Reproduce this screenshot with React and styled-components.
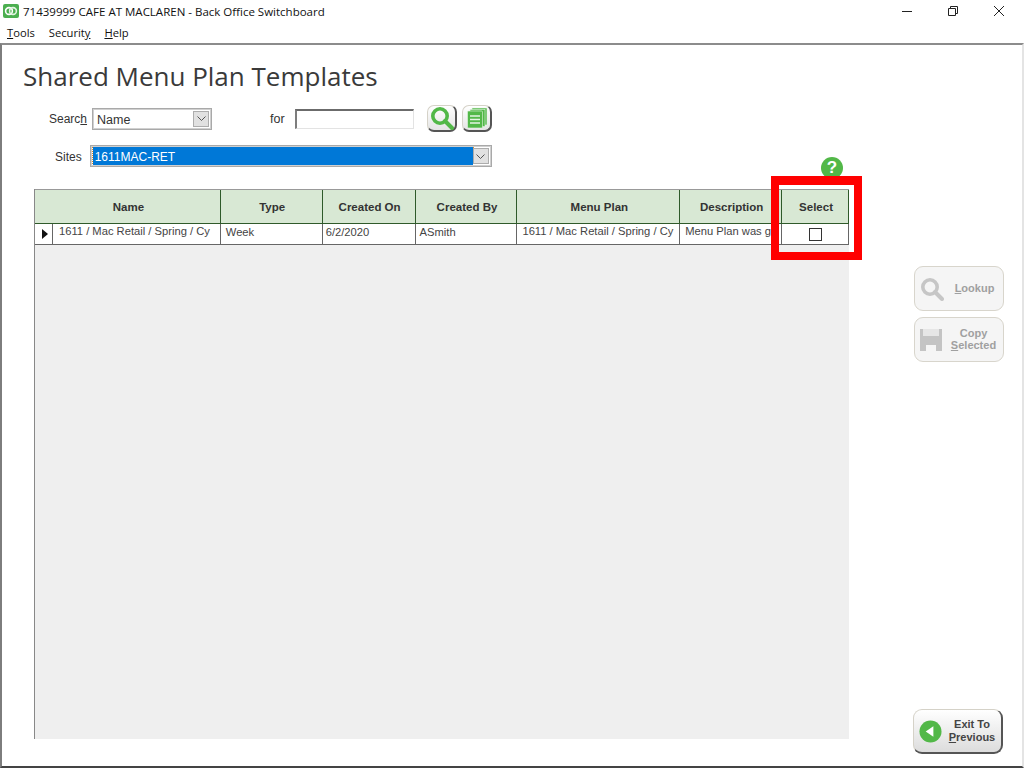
import React from 'react';
import styled, { createGlobalStyle } from 'styled-components';

const COLUMNS = [
  { title: 'Name', width: 186 },
  { title: 'Type', width: 102 },
  { title: 'Created On', width: 93 },
  { title: 'Created By', width: 102 },
  { title: 'Menu Plan', width: 163 },
  { title: 'Description', width: 102 },
  { title: 'Select', width: 67 },
];

const ROW = [
  { text: '1611 / Mac Retail / Spring / Cy', width: 168, indent: 6, top: 1 },
  { text: 'Week', width: 102, indent: 5, top: 2 },
  { text: '6/2/2020', width: 93, indent: 3, top: 2 },
  { text: 'ASmith', width: 102, indent: 4, top: 2 },
  { text: '1611 / Mac Retail / Spring / Cy', width: 163, indent: 5, top: 1 },
  { text: 'Menu Plan was g', width: 102, indent: 5, top: 1 },
];

function AppIcon() {
  return (
    <svg width="16" height="14" viewBox="0 0 16 14">
      <rect width="16" height="14" rx="2" fill="#4caf50" />
      <circle cx="6" cy="7" r="3.4" fill="none" stroke="#fff" strokeWidth="1.6" />
      <circle cx="10" cy="7" r="3.4" fill="none" stroke="#e4f4e2" strokeWidth="1.6" />
    </svg>
  );
}

function Magnifier({ color, size = 24 }) {
  return (
    <svg width={size} height={size} viewBox="0 0 24 24">
      <circle cx="10" cy="10" r="7.2" fill="none" stroke={color} strokeWidth="3.6" />
      <path d="M15 15 L22 22" stroke={color} strokeWidth="4" strokeLinecap="round" />
    </svg>
  );
}

function Pages() {
  return (
    <svg width="22" height="22" viewBox="0 0 22 22">
      <rect x="6" y="1" width="15" height="17" fill="#52b848" stroke="#e8f5e6" strokeWidth="0.6" />
      <rect x="4" y="2.5" width="15" height="17" fill="#52b848" stroke="#e8f5e6" strokeWidth="0.6" />
      <rect x="1.5" y="4" width="15" height="17" rx="1" fill="#52b848" stroke="#e8f5e6" strokeWidth="0.6" />
      <path d="M4 9 H14 M4 12.5 H14 M4 16 H14" stroke="#e4f4e2" strokeWidth="1.6" />
    </svg>
  );
}

function Disk() {
  return (
    <svg width="22" height="24" viewBox="0 0 22 24">
      <path d="M0 1 H22 V23 H0 Z" fill="#c4c4c4" />
      <rect x="3" y="1" width="16" height="7" fill="#e6e6e6" />
      <rect x="6" y="17" width="10" height="6" fill="#f5f5f5" />
    </svg>
  );
}

function BackArrow() {
  return (
    <svg width="23" height="23" viewBox="0 0 24 24">
      <circle cx="12" cy="12" r="11.5" fill="#52b848" />
      <path d="M7 12 L15 6.5 V17.5 Z" fill="#fff" />
    </svg>
  );
}

function Chevron() {
  return (
    <svg width="9" height="5" viewBox="0 0 9 5">
      <path d="M0.5 0.5 L4.5 4.5 L8.5 0.5" fill="none" stroke="#555" strokeWidth="1" />
    </svg>
  );
}

export default function App() {
  return (
    <Window>
      <GlobalStyle />
      <TitleBar>
        <AppIcon />
        <TitleText>71439999 CAFE AT MACLAREN - Back Office Switchboard</TitleText>
        <WindowControls>
          <svg width="12" height="12" viewBox="0 0 12 12">
            <path d="M1 6.5 H11" stroke="#222" strokeWidth="1" />
          </svg>
          <svg width="12" height="12" viewBox="0 0 12 12">
            <path d="M1.5 3.5 H8.5 V10.5 H1.5 Z M3.5 3.5 V1.5 H10.5 V8.5 H8.5" fill="none" stroke="#222" strokeWidth="1" />
          </svg>
          <svg width="12" height="12" viewBox="0 0 12 12">
            <path d="M1 1 L11 11 M11 1 L1 11" stroke="#222" strokeWidth="1" />
          </svg>
        </WindowControls>
      </TitleBar>
      <MenuBar>
        <MenuItem><u>T</u>ools</MenuItem>
        <MenuItem><span>Securit</span><u>y</u></MenuItem>
        <MenuItem><u>H</u>elp</MenuItem>
      </MenuBar>
      <Frame>
        <Content>
          <PageTitle>Shared Menu Plan Templates</PageTitle>
          <SearchRow>
            <Label>Searc<u>h</u></Label>
            <Combo $width={120}>
              <ComboValue>Name</ComboValue>
              <ComboArrow><Chevron /></ComboArrow>
            </Combo>
            <ForLabel>for</ForLabel>
            <ForInput type="text" />
            <ToolButton><Magnifier color="#52b848" /></ToolButton>
            <ToolButton><Pages /></ToolButton>
          </SearchRow>
          <SitesRow>
            <Label>Sites</Label>
            <Combo $width={402}>
              <ComboValue $selected>1611MAC-RET</ComboValue>
              <ComboArrow><Chevron /></ComboArrow>
            </Combo>
          </SitesRow>
          <HelpRow>
            <HelpBadge>?</HelpBadge>
          </HelpRow>
          <Grid>
            <HeaderRow>
              {COLUMNS.map((c) => (
                <HeaderCell key={c.title} $width={c.width}>{c.title}</HeaderCell>
              ))}
            </HeaderRow>
            <DataRow>
              <RowMarker />
              {ROW.map((cell, i) => (
                <DataCell key={i} $width={cell.width} $indent={cell.indent} $top={cell.top}>
                  {cell.text}
                </DataCell>
              ))}
              <SelectCell>
                <Check type="checkbox" />
              </SelectCell>
            </DataRow>
            <GridFill />
          </Grid>
          <Highlight />
        </Content>
        <Side>
          <SideGroup>
            <ActionButton disabled>
              <Magnifier color="#c6c6c6" />
              <ActionLabel><u>L</u>ookup</ActionLabel>
            </ActionButton>
            <ActionButton disabled>
              <Disk />
              <ActionLabel>Copy<br /><u>S</u>elected</ActionLabel>
            </ActionButton>
          </SideGroup>
          <ExitButton>
            <BackArrow />
            <ExitLabel>Exit To<br /><u>P</u>revious</ExitLabel>
          </ExitButton>
        </Side>
      </Frame>
    </Window>
  );
}

const GlobalStyle = createGlobalStyle`
  html, body {
    margin: 0;
    padding: 0;
    background: #fff;
    overflow: hidden;
  }
  * {
    box-sizing: border-box;
  }
`;

const Window = styled.div`
  display: flex;
  flex-direction: column;
  width: 1024px;
  height: 768px;
  background: #fff;
  font-family: "Liberation Sans", Arial, sans-serif;
  font-size: 12px;
  color: #333;
`;

const TitleBar = styled.div`
  display: flex;
  align-items: center;
  height: 22px;
  padding-left: 3px;
  gap: 4px;
`;

const TitleText = styled.div`
  font-family: "Open Sans", sans-serif;
  font-size: 11.5px;
  color: #111;
`;

const WindowControls = styled.div`
  display: flex;
  align-items: center;
  gap: 34px;
  margin-left: auto;
  margin-right: 19px;
`;

const MenuBar = styled.div`
  display: flex;
  align-items: center;
  height: 21px;
  padding-left: 7px;
  gap: 14px;
`;

const MenuItem = styled.span`
  font-family: "Open Sans", sans-serif;
  font-size: 11.2px;
  color: #111;
`;

const Frame = styled.div`
  flex: 1;
  display: flex;
  border-top: 2px solid #8c8c8c;
  border-left: 2px solid #7d7d7d;
  border-right: 2px solid #e4e4e4;
  border-bottom: 2px solid #444;
  min-height: 0;
`;

const Content = styled.div`
  position: relative;
  width: 910px;
  padding: 16px 0 0 21px;
  display: flex;
  flex-direction: column;
`;

const PageTitle = styled.h1`
  margin: 0;
  height: 30px;
  line-height: 30px;
  font-family: "Open Sans", sans-serif;
  font-size: 26px;
  font-weight: 400;
  color: #3a3a3a;
`;

const SearchRow = styled.div`
  display: flex;
  align-items: center;
  height: 27px;
  margin-top: 14px;
  padding-left: 26px;
`;

const SitesRow = styled.div`
  display: flex;
  align-items: center;
  height: 22px;
  margin-top: 13px;
  padding-left: 32px;
  gap: 3px;
`;

const Label = styled.label`
  padding-top: 1px;
  font-size: 12px;
  color: #333;
  margin-right: 5px;
`;

const Combo = styled.div`
  display: flex;
  align-items: center;
  width: ${(p) => p.$width}px;
  height: 22px;
  padding: 1px 2px;
  border: 1px solid #a9a9a9;
  outline: 1px solid #d0d0d0;
  outline-offset: -2px;
  background: #fff;
`;

const ComboValue = styled.div`
  flex: 1;
  height: 18px;
  line-height: 20px;
  padding-left: 2px;
  font-size: ${(p) => (p.$selected ? '12px' : '12.5px')};
  color: ${(p) => (p.$selected ? '#fff' : '#333')};
  background: ${(p) => (p.$selected ? '#0078d7' : 'transparent')};
  outline: ${(p) => (p.$selected ? '1px dotted #e08a20' : 'none')};
`;

const ComboArrow = styled.div`
  display: flex;
  align-items: center;
  justify-content: center;
  width: 16px;
  height: 16px;
  background: #e1e1e1;
  border: 1px solid #adadad;
`;

const ForLabel = styled.span`
  margin-left: 58px;
  width: 25px;
  padding-top: 1px;
  font-size: 12.5px;
  color: #333;
`;

const ForInput = styled.input`
  width: 119px;
  height: 20px;
  margin: 0 13px 0 0;
  padding: 0;
  background: #fff;
  border-style: solid;
  border-width: 2px 1px 1px 2px;
  border-color: #6b6b6b #e3e3e3 #e3e3e3 #7d7d7d;
`;

const ToolButton = styled.button`
  display: flex;
  align-items: center;
  justify-content: center;
  width: 30px;
  height: 27px;
  margin-right: 5px;
  padding: 0;
  background: linear-gradient(#fff, #e4e4e4);
  border: 1px solid #d5d2c8;
  border-right: 2px solid #555;
  border-bottom: 2px solid #555;
  border-radius: 7px;
`;

const HelpRow = styled.div`
  display: flex;
  justify-content: flex-end;
  width: 820px;
  height: 32px;
  margin-top: -10px;
`;

const HelpBadge = styled.div`
  width: 22px;
  height: 22px;
  border-radius: 50%;
  background: #52b848;
  color: #fff;
  font-size: 17px;
  font-weight: 700;
  line-height: 22px;
  text-align: center;
`;

const Grid = styled.div`
  flex: 1;
  display: flex;
  flex-direction: column;
  width: 815px;
  margin: 0 0 27px 11px;
  border-left: 1px solid #888;
`;

const HeaderRow = styled.div`
  display: flex;
  height: 35px;
  border-top: 1px solid #999;
  border-bottom: 1px solid #2f5a2a;
`;

const HeaderCell = styled.div`
  display: flex;
  align-items: center;
  justify-content: center;
  width: ${(p) => p.$width}px;
  padding-left: 2px;
  background: #d8e8d4;
  border-right: 1px solid #2f5a2a;
  font-size: 11.5px;
  font-weight: 700;
  color: #333;
`;

const DataRow = styled.div`
  display: flex;
  height: 21px;
  border-bottom: 1px solid #666;
`;

const RowMarker = styled.div`
  position: relative;
  width: 18px;
  border-right: 1px solid #666;
  &::after {
    content: '';
    position: absolute;
    left: 7px;
    top: 5px;
    border-left: 6px solid #111;
    border-top: 5px solid transparent;
    border-bottom: 5px solid transparent;
  }
`;

const DataCell = styled.div`
  width: ${(p) => p.$width}px;
  padding: ${(p) => p.$top}px 0 0 ${(p) => p.$indent}px;
  border-right: 1px solid #666;
  white-space: nowrap;
  font-size: 11.2px;
  color: #444;
`;

const SelectCell = styled.div`
  display: flex;
  align-items: center;
  justify-content: center;
  width: 67px;
  border-right: 1px solid #666;
`;

const Check = styled.input`
  appearance: none;
  width: 13px;
  height: 13px;
  margin: 0;
  background: #fff;
  border: 1px solid #333;
`;

const GridFill = styled.div`
  flex: 1;
  background: #efefef;
`;

const Highlight = styled.div`
  position: absolute;
  left: 769px;
  top: 131px;
  width: 91px;
  height: 84px;
  border: 8px solid #ff0000;
  border-top-width: 9px;
  pointer-events: none;
`;

const Side = styled.div`
  flex: 1;
  display: flex;
  flex-direction: column;
  justify-content: space-between;
  padding: 221px 0 12px 2px;
`;

const SideGroup = styled.div`
  display: flex;
  flex-direction: column;
  gap: 6px;
`;

const ActionButton = styled.button`
  display: flex;
  align-items: center;
  width: 90px;
  height: 45px;
  padding: 0 0 0 5px;
  background: #f5f5f5;
  border: 1px solid #d8d5cc;
  border-radius: 9px;
  font-family: "Liberation Sans", Arial, sans-serif;
`;

const ActionLabel = styled.span`
  flex: 1;
  padding: 0 0 2px 2px;
  font-size: 11px;
  font-weight: 700;
  line-height: 12px;
  text-align: center;
  color: #a0a0a0;
`;

const ExitButton = styled.button`
  display: flex;
  align-items: center;
  width: 90px;
  height: 45px;
  margin-left: -1px;
  padding: 0 0 0 5px;
  background: linear-gradient(#fff, #dcdcdc);
  border: 1px solid #d5d2c8;
  border-right: 2px solid #555;
  border-bottom: 2px solid #555;
  border-radius: 9px;
  font-family: "Liberation Sans", Arial, sans-serif;
`;

const ExitLabel = styled.span`
  flex: 1;
  padding: 0 0 1px 1px;
  font-size: 11px;
  font-weight: 700;
  line-height: 13px;
  text-align: center;
  color: #444;
`;
